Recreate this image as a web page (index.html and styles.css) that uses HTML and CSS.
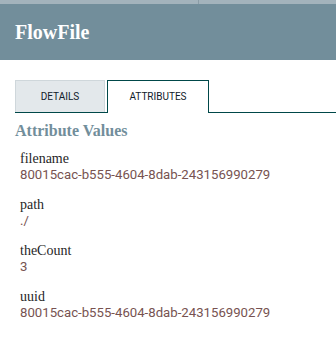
FILE: index.html
```html
<!DOCTYPE html>
<html lang="en">
<head>
  <meta charset="UTF-8" />
  <title>FlowFile</title>
  <link rel="stylesheet" href="styles.css">
</head>
<body>
  <div class="top-strip">
    <div class="strip-left"></div>
  </div>
  <div class="dialog-header">FlowFile</div>

  <div class="tabs">
    <div class="tab">Details</div>
    <div class="tab selected">Attributes</div>
  </div>

  <div class="content">
    <h2>Attribute Values</h2>
    <div class="attributes">
      <div class="attribute">
        <div class="attr-name">filename</div>
        <div class="attr-value">80015cac-b555-4604-8dab-243156990279</div>
      </div>
      <div class="attribute">
        <div class="attr-name">path</div>
        <div class="attr-value">./</div>
      </div>
      <div class="attribute">
        <div class="attr-name">theCount</div>
        <div class="attr-value">3</div>
      </div>
      <div class="attribute">
        <div class="attr-name">uuid</div>
        <div class="attr-value">80015cac-b555-4604-8dab-243156990279</div>
      </div>
    </div>
  </div>
</body>
</html>
```

FILE: styles.css
```css
:root {
  --header: #728e9b;
  --teal: #004849;
  --text: #262626;
  --value: #775351;
}

* {
  box-sizing: border-box;
  margin: 0;
  padding: 0;
}

body {
  background: #fff;
  color: var(--text);
  font-family: Roboto, sans-serif;
  width: 336px;
  overflow: hidden;
}

.top-strip {
  height: 4px;
  background: #a3b3bc;
  display: flex;
}

.strip-left {
  width: 199px;
  border-right: 1px solid #8a9ca6;
}

.dialog-header {
  height: 56px;
  background: var(--header);
  color: #fff;
  font-family: "Liberation Serif", serif;
  font-weight: bold;
  font-size: 20px;
  line-height: 24px;
  padding: 16px 15px;
}

.tabs {
  display: flex;
  gap: 2px;
  margin: 20px 0 0 15px;
  height: 33px;
  border-bottom: 1px solid var(--teal);
}

.tab {
  width: 90px;
  height: 32px;
  line-height: 31px;
  text-align: center;
  font-size: 10px;
  text-transform: uppercase;
  color: #10202a;
  background: #e3e8eb;
  border: 1px solid #cfd7db;
  border-bottom: none;
}

.tab.selected {
  width: 102px;
  height: 33px;
  background: #fff;
  border-color: var(--teal);
  margin-bottom: -1px;
}

.content {
  padding: 0 15px;
}

h2 {
  margin-top: 9px;
  font-family: "Liberation Serif", serif;
  font-weight: bold;
  font-size: 16px;
  line-height: 18px;
  color: var(--header);
}

.attributes {
  display: flex;
  flex-direction: column;
  gap: 14px;
  margin: 11px 0 0 5px;
}

.attr-name {
  font-family: "Liberation Serif", serif;
  font-size: 14px;
  line-height: 16px;
  color: var(--text);
}

.attr-value {
  font-size: 13.2px;
  line-height: 16px;
  color: var(--value);
}
```
